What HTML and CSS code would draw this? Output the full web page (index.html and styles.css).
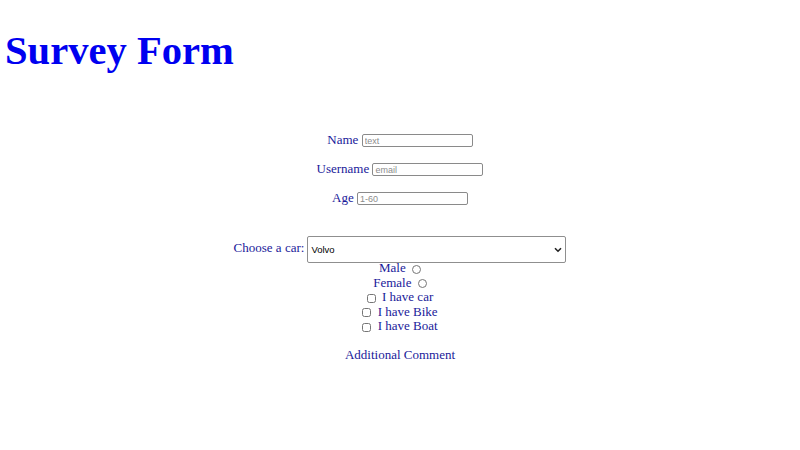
FILE: index.html
```html
<!DOCTYPE html>
<html lang="en">
<head>
<meta charset="utf-8">
<title>Survey Form</title>
<link rel="stylesheet" href="styles.css">
</head>
<body>
<header class="page-head">
  <h1 class="title">Survey Form</h1>
</header>
<form class="survey">
  <div class="row text-row"><label for="name">Name</label> <input id="name" class="field" type="text" placeholder="text"></div>
  <div class="row text-row"><label for="user">Username</label> <input id="user" class="field" type="email" placeholder="email"></div>
  <div class="row text-row"><label for="age">Age</label> <input id="age" class="field" type="number" placeholder="1-60"></div>
  <div class="row select-row">
    <label for="cars" class="select-label">Choose a car:</label><span class="select-wrap"><select id="cars" class="car-select">
      <option>Volvo</option>
      <option>Saab</option>
      <option>Mercedes</option>
      <option>Audi</option>
    </select><svg class="chevron" width="8" height="6" viewBox="0 0 8 6" aria-hidden="true"><path d="M1 1.2 L4 4.2 L7 1.2" fill="none" stroke="#222" stroke-width="1.6"/></svg></span>
  </div>
  <div class="row choice-row"><label for="male">Male</label> <input id="male" class="tick after" type="radio" name="gender"></div>
  <div class="row choice-row"><label for="female">Female</label> <input id="female" class="tick after" type="radio" name="gender"></div>
  <div class="row choice-row"><input id="car" class="tick before" type="checkbox"> <label for="car">I have car</label></div>
  <div class="row choice-row"><input id="bike" class="tick before" type="checkbox"> <label for="bike">I have Bike</label></div>
  <div class="row choice-row"><input id="boat" class="tick before" type="checkbox"> <label for="boat">I have Boat</label></div>
  <div class="row comment-row"><label>Additional Comment</label></div>
</form>
</body>
</html>
```

FILE: styles.css
```css
html, body {
  margin: 0;
  padding: 0;
  background: #ffffff;
}

body {
  font-family: "Liberation Serif", "Times New Roman", serif;
  color: #1a1a9a;
}

.page-head {
  padding: 28px 0 0 5px;
}

.title {
  margin: 0;
  font-size: 40.6px;
  line-height: 46px;
  font-weight: bold;
  color: #0000f0;
}

.survey {
  margin-top: 50.5px;
  text-align: center;
  font-size: 13px;
}

.row {
  white-space: nowrap;
}

.text-row {
  height: 29px;
  line-height: 29px;
}

.field {
  box-sizing: border-box;
  width: 111px;
  height: 13px;
  padding: 0 2px;
  margin: 0;
  border: 1px solid #8a8a8a;
  border-radius: 2px;
  font-family: "Liberation Sans", Arial, sans-serif;
  font-size: 9px;
  vertical-align: middle;
  -moz-appearance: textfield;
}

.field::placeholder {
  color: #8c8c8c;
}

.field::-webkit-outer-spin-button,
.field::-webkit-inner-spin-button {
  -webkit-appearance: none;
  margin: 0;
}

.select-row {
  margin-top: 22.5px;
  height: 27px;
  line-height: 27px;
}

.select-label {
  margin-right: 3px;
}

.select-wrap {
  position: relative;
  display: inline-block;
  vertical-align: middle;
  height: 27px;
}

.car-select {
  -webkit-appearance: none;
  appearance: none;
  box-sizing: border-box;
  display: block;
  width: 259px;
  height: 27px;
  margin: 0;
  padding: 0 20px 0 3px;
  font-family: "Liberation Sans", Arial, sans-serif;
  font-size: 9.5px;
  color: #000;
  background: #fff;
  border: 1px solid #8f8f8f;
  border-radius: 2px;
}

.chevron {
  position: absolute;
  right: 4px;
  top: 11px;
  pointer-events: none;
}

.choice-row {
  height: 14.5px;
  line-height: 14.5px;
}

.tick {
  width: 9px;
  height: 9px;
  margin: 0;
  vertical-align: middle;
}

.tick.after {
  margin-left: 3px;
}

.tick.before {
  margin-right: 3px;
}

.comment-row {
  margin-top: 14px;
  height: 14.5px;
  line-height: 14.5px;
}
```
